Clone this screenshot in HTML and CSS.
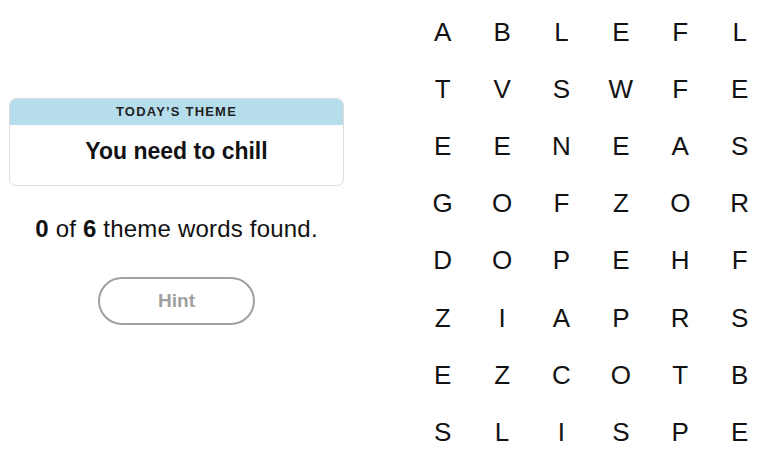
FILE: index.html
```html
<!DOCTYPE html>
<html>
<head>
<meta charset="utf-8">
<link rel="stylesheet" href="styles.css">
</head>
<body>
<div class="page">
  <div class="side">
    <div class="theme-card">
      <div class="theme-head">TODAY’S THEME</div>
      <div class="theme-body">You need to chill</div>
    </div>
    <p class="found"><b>0</b> of <b>6</b> theme words found.</p>
    <button class="hint">Hint</button>
  </div>
  <div class="board">
    <span>A</span><span>B</span><span>L</span><span>E</span><span>F</span><span>L</span>
    <span>T</span><span>V</span><span>S</span><span>W</span><span>F</span><span>E</span>
    <span>E</span><span>E</span><span>N</span><span>E</span><span>A</span><span>S</span>
    <span>G</span><span>O</span><span>F</span><span>Z</span><span>O</span><span>R</span>
    <span>D</span><span>O</span><span>P</span><span>E</span><span>H</span><span>F</span>
    <span>Z</span><span>I</span><span>A</span><span>P</span><span>R</span><span>S</span>
    <span>E</span><span>Z</span><span>C</span><span>O</span><span>T</span><span>B</span>
    <span>S</span><span>L</span><span>I</span><span>S</span><span>P</span><span>E</span>
  </div>
</div>
</body>
</html>
```
FILE: styles.css
```css
html, body {
  margin: 0;
  padding: 0;
  background: #ffffff;
  overflow: hidden;
}
body {
  font-family: "Liberation Sans", Arial, sans-serif;
  color: #121212;
}
.page {
  display: flex;
  width: 768px;
  height: 469px;
  overflow: hidden;
}
.side {
  width: 335px;
  margin-left: 9px;
  padding-top: 98px;
  display: flex;
  flex-direction: column;
  align-items: center;
  flex-shrink: 0;
}
.theme-card {
  width: 100%;
  box-sizing: border-box;
  border: 1px solid #dcdcdc;
  border-radius: 7px;
  overflow: hidden;
}
.theme-head {
  background: #b6ddeb;
  height: 26px;
  line-height: 26px;
  text-align: center;
  font-size: 13px;
  font-weight: 700;
  letter-spacing: 1.2px;
  color: #222;
}
.theme-body {
  height: 60px;
  line-height: 53px;
  text-align: center;
  font-size: 23px;
  font-weight: 700;
  letter-spacing: 0;
  color: #121212;
}
.found {
  margin: 29px 0 0 0;
  font-size: 24px;
  line-height: 28px;
  text-align: center;
  letter-spacing: 0.2px;
}
.found b {
  font-weight: 700;
}
.hint {
  margin-top: 34px;
  width: 157px;
  height: 48px;
  border: 2px solid #a0a0a0;
  border-radius: 24px;
  background: #fff;
  color: #a0a0a0;
  font-family: "Liberation Sans", Arial, sans-serif;
  font-size: 19px;
  font-weight: 700;
  padding: 0;
}
.board {
  margin-left: 69px;
  margin-top: 3.6px;
  display: grid;
  grid-template-columns: repeat(6, 59.4px);
  grid-template-rows: repeat(8, 57.2px);
  flex-shrink: 0;
}
.board span {
  display: flex;
  align-items: center;
  justify-content: center;
  font-size: 26px;
  color: #121212;
}
```
